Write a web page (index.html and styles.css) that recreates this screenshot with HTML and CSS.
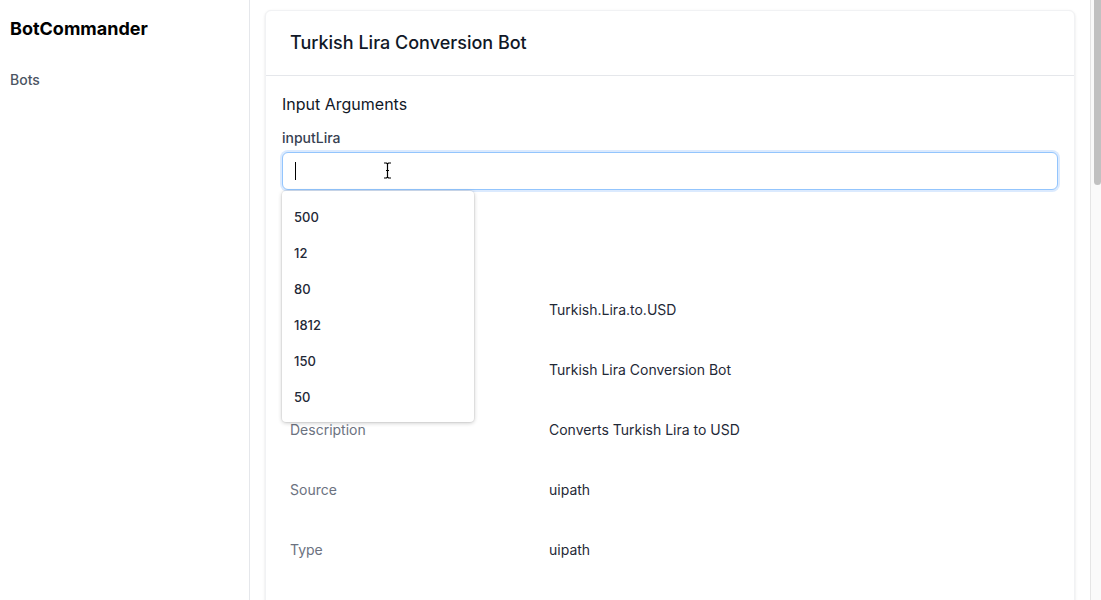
FILE: index.html
```html
<!DOCTYPE html>
<html lang="en">
<head>
<meta charset="utf-8">
<title>BotCommander</title>
<link rel="stylesheet" href="styles.css">
</head>
<body>
<div class="app">
  <aside class="sidebar">
    <div class="brand">BotCommander</div>
    <nav class="nav">
      <a class="nav-link">Bots</a>
    </nav>
  </aside>
  <main class="main">
    <section class="card">
      <header class="card-header">
        <h1 class="card-title">Turkish Lira Conversion Bot</h1>
      </header>
      <div class="card-body">
        <h2 class="section-title">Input Arguments</h2>
        <label class="field-label">inputLira</label>
        <div class="field">
          <div class="input"><span class="caret"></span></div>
          <svg class="ibeam" width="9" height="17" viewBox="0 0 9 17">
            <path d="M1 1h2.5l1 1 1-1H8M4.5 2v13M1 16h2.5l1-1 1 1H8M3 8.5h3" fill="none" stroke="#000" stroke-width="1.2"/>
          </svg>
          <ul class="dropdown">
            <li class="option">500</li>
            <li class="option">12</li>
            <li class="option">80</li>
            <li class="option">1812</li>
            <li class="option">150</li>
            <li class="option">50</li>
          </ul>
        </div>
        <div class="details">
          <div class="row"><div class="label"></div><div class="value">Turkish.Lira.to.USD</div></div>
          <div class="row"><div class="label"></div><div class="value">Turkish Lira Conversion Bot</div></div>
          <div class="row"><div class="label">Description</div><div class="value">Converts Turkish Lira to USD</div></div>
          <div class="row"><div class="label">Source</div><div class="value">uipath</div></div>
          <div class="row"><div class="label">Type</div><div class="value">uipath</div></div>
        </div>
      </div>
    </section>
  </main>
  <div class="scrollbar"><div class="thumb"></div></div>
</div>
</body>
</html>
```

FILE: styles.css
```css
* { box-sizing: border-box; }
html, body {
  margin: 0;
  padding: 0;
  height: 600px;
  overflow: hidden;
  background: #ffffff;
  font-family: Inter, "Noto Sans", "Liberation Sans", sans-serif;
  color: #111827;
}
.app {
  display: flex;
  height: 600px;
}
.sidebar {
  width: 250px;
  flex: 0 0 250px;
  border-right: 1px solid #e5e7eb;
  padding: 17px 10px;
}
.brand {
  font-size: 18px;
  font-weight: 700;
  line-height: 24px;
  color: #000;
}
.nav {
  margin-top: 29px;
}
.nav-link {
  display: block;
  font-size: 14px;
  font-weight: 500;
  line-height: 20px;
  color: #4b5563;
}
.main {
  flex: 1;
  padding: 10px 15px;
  overflow: hidden;
}
.card {
  background: #fff;
  border: 1px solid #f1f2f4;
  border-radius: 6px;
  box-shadow: 0 1px 3px rgba(0,0,0,0.10), 0 1px 2px -1px rgba(0,0,0,0.10);
  height: 620px;
}
.card-header {
  height: 65px;
  display: flex;
  align-items: center;
  padding: 0 24px;
  border-bottom: 1px solid #e5e7eb;
}
.card-title {
  margin: 0;
  font-size: 18px;
  font-weight: 500;
  color: #111827;
  line-height: 24px;
}
.card-body {
  padding: 16px;
}
.section-title {
  margin: 0;
  font-size: 16px;
  font-weight: 400;
  line-height: 24px;
  color: #111827;
}
.field-label {
  display: block;
  margin-top: 12px;
  font-size: 14px;
  font-weight: 500;
  line-height: 20px;
  color: #374151;
}
.field {
  position: relative;
  margin-top: 4px;
}
.input {
  height: 38px;
  border: 1px solid #93c5fd;
  border-radius: 6px;
  box-shadow: 0 0 0 2px #dbeafe;
  padding: 9px 12px;
  background: #fff;
  display: flex;
  align-items: center;
}
.caret {
  width: 1px;
  height: 18px;
  background: #000;
}
.ibeam {
  position: absolute;
  left: 101px;
  top: 10px;
}
.dropdown {
  position: absolute;
  left: 0;
  top: 39px;
  width: 192px;
  margin: 0;
  padding: 8px 0 7px;
  list-style: none;
  background: #fff;
  border-radius: 4px;
  box-shadow: 0 1px 4px rgba(0,0,0,0.22), 0 0 0 1px rgba(0,0,0,0.04);
  z-index: 5;
}
.option {
  height: 36px;
  line-height: 36px;
  padding: 0 12px;
  font-size: 13px;
  font-weight: 500;
  color: #1f2937;
}
.details {
  margin-top: 90px;
}
.row {
  display: flex;
  padding: 20px 0;
  font-size: 14px;
  line-height: 20px;
}
.label {
  width: 259px;
  padding: 0 8px;
  color: #6b7280;
}
.value {
  padding: 0 8px;
  color: #1f2937;
}
.scrollbar {
  flex: 0 0 11px;
  border-left: 1px solid #e5e5e5;
  background: #fafafa;
  padding: 0 0 0 3px;
}
.thumb {
  height: 185px;
  background: #c1c1c1;
  border-radius: 0 0 4px 4px;
}
```
